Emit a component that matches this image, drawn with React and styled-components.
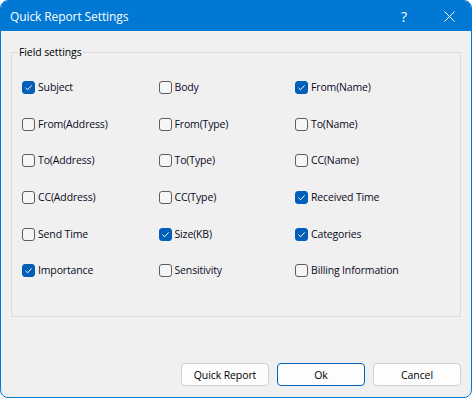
import React from 'react'
import styled, { createGlobalStyle } from 'styled-components'

const FIELDS = [
  { label: 'Subject', checked: true },
  { label: 'Body', checked: false },
  { label: 'From(Name)', checked: true },
  { label: 'From(Address)', checked: false },
  { label: 'From(Type)', checked: false },
  { label: 'To(Name)', checked: false },
  { label: 'To(Address)', checked: false },
  { label: 'To(Type)', checked: false },
  { label: 'CC(Name)', checked: false },
  { label: 'CC(Address)', checked: false },
  { label: 'CC(Type)', checked: false },
  { label: 'Received Time', checked: true },
  { label: 'Send Time', checked: false },
  { label: 'Size(KB)', checked: true },
  { label: 'Categories', checked: true },
  { label: 'Importance', checked: true },
  { label: 'Sensitivity', checked: false },
  { label: 'Billing Information', checked: false },
]

const GlobalStyle = createGlobalStyle`
  html, body {
    margin: 0;
    padding: 0;
    background: #ffffff;
  }
  body {
    font-family: 'Open Sans', 'Noto Sans', sans-serif;
  }
`

const App = () => {
  const [fields, setFields] = React.useState(FIELDS)

  const toggle = index =>
    setFields(list => list.map((f, i) => (i === index ? { ...f, checked: !f.checked } : f)))

  return (
    <>
      <GlobalStyle />
      <Window>
        <TitleBar>
          <Title>Quick Report Settings</Title>
          <TitleButton>?</TitleButton>
          <TitleButton aria-label="close">
            <svg width="11" height="11" viewBox="0 0 11 11">
              <path d="M0.5 0.5 L10.5 10.5 M10.5 0.5 L0.5 10.5" stroke="#fff" strokeWidth="1" fill="none" />
            </svg>
          </TitleButton>
        </TitleBar>
        <Body>
          <GroupBox>
            <Legend>Field settings</Legend>
            <FieldGrid>
              {fields.map(({ label, checked }, i) => (
                <Field key={label} onClick={() => toggle(i)}>
                  <Box checked={checked}>
                    {checked && (
                      <svg width="9" height="9" viewBox="0 0 9 9">
                        <path d="M1.5 4.8 L3.6 6.8 L7.6 2.4" stroke="#fff" strokeWidth="1" fill="none" />
                      </svg>
                    )}
                  </Box>
                  <Label>{label}</Label>
                </Field>
              ))}
            </FieldGrid>
          </GroupBox>
          <Buttons>
            <Button>Quick Report</Button>
            <Button primary>Ok</Button>
            <Button>Cancel</Button>
          </Buttons>
        </Body>
      </Window>
    </>
  )
}

const Window = styled.div`
  box-sizing: border-box;
  width: 472px;
  height: 398px;
  border: 1px solid #0078d4;
  border-radius: 8px;
  background: #f0f0f0;
  overflow: hidden;
  display: flex;
  flex-direction: column;
`

const TitleBar = styled.div`
  height: 30px;
  background: #0078d4;
  display: flex;
  align-items: center;
  padding-left: 9px;
  flex-shrink: 0;
`

const Title = styled.div`
  flex: 1;
  color: #ffffff;
  font-size: 12px;
  letter-spacing: -0.1px;
`

const TitleButton = styled.div`
  width: 46px;
  height: 30px;
  display: flex;
  align-items: center;
  justify-content: center;
  color: #ffffff;
  font-size: 14px;
  &:last-child {
    width: 44px;
  }
`

const Body = styled.div`
  flex: 1;
  display: flex;
  flex-direction: column;
  padding: 14px 10px 11px 10px;
`

const GroupBox = styled.fieldset`
  margin: 0;
  height: 272px;
  box-sizing: border-box;
  border: 1px solid #dcdcdc;
  padding: 0 10px 0 10px;
  min-width: 0;
`

const Legend = styled.legend`
  font-size: 10.5px;
  letter-spacing: -0.1px;
  color: #000;
  padding: 0 1px;
  margin-left: -4px;
  line-height: 14px;
`

const FieldGrid = styled.div`
  display: grid;
  grid-template-columns: 136.5px 136.5px 1fr;
  grid-auto-rows: 36.7px;
  padding-top: 22px;
`

const Field = styled.label`
  display: flex;
  align-items: flex-start;
  gap: 3px;
  cursor: default;
`

const Box = styled.span`
  box-sizing: border-box;
  width: 13px;
  height: 13px;
  border-radius: 3px;
  border: 1px solid ${p => (p.checked ? '#005fb8' : '#5d5d5d')};
  background: ${p => (p.checked ? '#005fb8' : '#f6f6f6')};
  display: flex;
  align-items: center;
  justify-content: center;
`

const Label = styled.span`
  font-size: 10.5px;
  letter-spacing: -0.15px;
  line-height: 13px;
  color: #0a0a1e;
`

const Buttons = styled.div`
  margin-top: auto;
  display: flex;
  justify-content: flex-end;
  gap: 8px;
`

const Button = styled.button`
  box-sizing: border-box;
  width: 88px;
  height: 23px;
  border-radius: 4px;
  border: 1px solid ${p => (p.primary ? '#0067c0' : '#d0d0d0')};
  background: #fdfdfd;
  font-family: 'Open Sans', 'Noto Sans', sans-serif;
  font-size: 10.5px;
  letter-spacing: -0.1px;
  color: #000;
  padding: 0;
`

export default App
